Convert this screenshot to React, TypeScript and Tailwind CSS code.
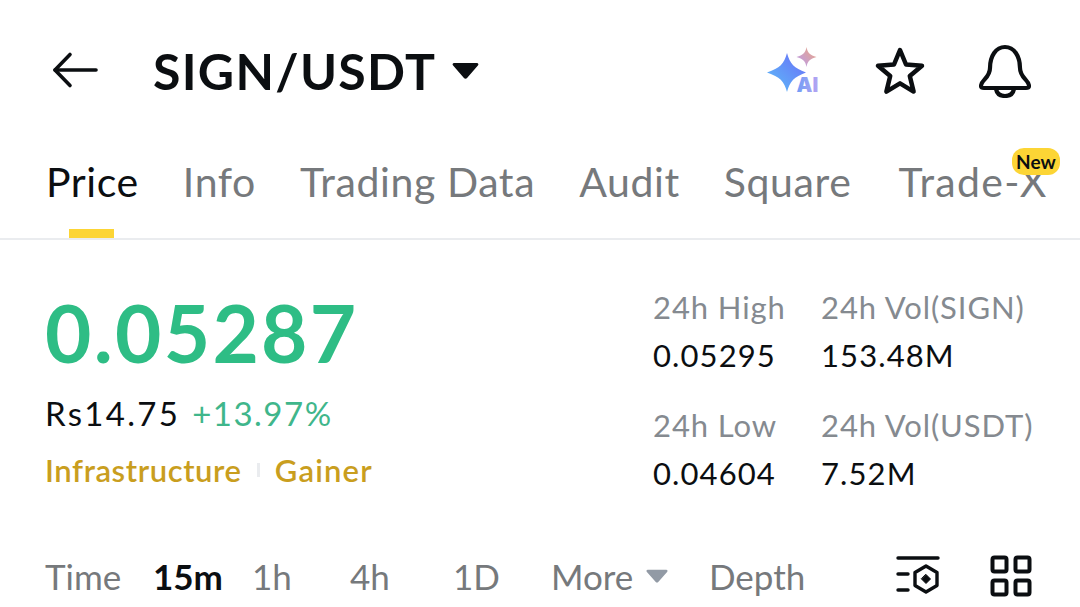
import * as React from "react";

// =============================================================================
// ICONS
// =============================================================================

const BackIcon = () => (
  <svg width="48" height="40" viewBox="0 0 48 40" fill="none" stroke="#0b0e11" strokeWidth="3.6" strokeLinecap="round" strokeLinejoin="round">
    <path d="M4 19H45" />
    <path d="M19 3.5L4 19L19 34.5" />
  </svg>
);

const SparkleIcon = () => (
  <svg width="54" height="50" viewBox="0 0 54 50" className="-mt-[2px] overflow-visible">
    <defs>
      <linearGradient id="bigStar" x1="0" y1="1" x2="1" y2="0">
        <stop offset="0" stopColor="#5cc0f8" />
        <stop offset="1" stopColor="#6a6cf8" />
      </linearGradient>
      <linearGradient id="smallStar" x1="0" y1="1" x2="1" y2="0">
        <stop offset="0" stopColor="#b79cf5" />
        <stop offset="1" stopColor="#eda67e" />
      </linearGradient>
      <linearGradient id="aiText" x1="0" y1="0" x2="1" y2="0">
        <stop offset="0" stopColor="#6f9df6" />
        <stop offset="1" stopColor="#b5a4f2" />
      </linearGradient>
    </defs>
    <path d="M20 8C23 19 27 23 39 27.5C27 32 23 36 20 47C17 36 13 32 0 27.5C13 23 17 19 20 8Z" fill="url(#bigStar)" />
    <path d="M39.5 2C40.5 8 43 10 49.5 12C43 14 40.5 16 39.5 22C38.5 16 36 14 29.5 12C36 10 38.5 8 39.5 2Z" fill="url(#smallStar)" />
    <text x="29.5" y="47" fontSize="20" fontWeight="900" fontFamily="Inter, sans-serif" fill="url(#aiText)">AI</text>
  </svg>
);

const StarIcon = () => (
  <svg width="52" height="50" viewBox="0 0 52 50" fill="none" stroke="#0b0e11" strokeWidth="4.5" strokeLinejoin="round">
    <path d="M26 4L32 18.5L48 19.8L35.8 30L39.6 45.6L26 37.4L12.4 45.6L16.2 30L4 19.8L20 18.5Z" />
  </svg>
);

const BellIcon = () => (
  <svg width="52" height="54" viewBox="0 0 52 54" fill="none" stroke="#0b0e11" strokeWidth="4.2" strokeLinejoin="round" strokeLinecap="round">
    <path d="M11 24C11 12 17 3 26 3C35 3 41 12 41 24C41 34 50 36 50 42C50 43.5 49 44 47 44H5C3 44 2 43.5 2 42C2 36 11 34 11 24Z" />
    <path d="M17 45C18 50 21 52 26 52C31 52 34 50 35 45" />
  </svg>
);

const IndicatorIcon = () => (
  <svg width="44" height="40" viewBox="0 0 44 40" fill="none" stroke="#0b0e11" strokeLinecap="round" strokeLinejoin="round">
    <path d="M2 2H42" strokeWidth="3.4" />
    <path d="M2 18H12" strokeWidth="3.4" />
    <path d="M2 34H12" strokeWidth="3.4" />
    <path d="M30 10L41 16.5V29.5L30 36L19 29.5V16.5Z" strokeWidth="3.4" />
    <path d="M30 18.5L34.5 23L30 27.5L25.5 23Z" fill="#0b0e11" strokeWidth="1" />
  </svg>
);

const GridIcon = () => (
  <svg width="42" height="42" viewBox="0 0 42 42" fill="none" stroke="#0b0e11" strokeWidth="4" strokeLinejoin="round">
    <rect x="2.5" y="2.5" width="14" height="14" rx="2" />
    <rect x="25.5" y="2.5" width="14" height="14" rx="2" />
    <rect x="2.5" y="25.5" width="14" height="14" rx="2" />
    <rect x="25.5" y="25.5" width="14" height="14" rx="2" />
  </svg>
);

const Caret = ({ color, width }: { color: string; width: number }) => (
  <svg width={width} height={width * 0.65} viewBox="0 0 26 17">
    <path d="M2 1H24C25.5 1 26 2.5 25 3.5L14.5 15.5C13.7 16.4 12.3 16.4 11.5 15.5L1 3.5C0 2.5 0.5 1 2 1Z" fill={color} />
  </svg>
);

// =============================================================================
// DATA
// =============================================================================

const tabs = ["Info", "Trading Data", "Audit", "Square"];

const stats = [
  { label: "24h High", value: "0.05295" },
  { label: "24h Vol(SIGN)", value: "153.48M" },
  { label: "24h Low", value: "0.04604" },
  { label: "24h Vol(USDT)", value: "7.52M" },
];

// =============================================================================
// COMPONENT
// =============================================================================

const App: React.FC = () => {
  return (
    <div className="h-[607px] w-[1080px] overflow-hidden bg-white font-['Lato','Inter',sans-serif] text-[#0b0e11]">
      {/* Header */}
      <div className="flex h-[142px] items-center pl-[51px] pr-[49px]">
        <BackIcon />
        <div className="ml-[54px] text-[50px] font-bold leading-none tracking-[1.3px]">SIGN/USDT</div>
        <div className="ml-[16px]">
          <Caret color="#0b0e11" width={27} />
        </div>
        <div className="ml-auto flex items-center">
          <SparkleIcon />
          <div className="ml-[53px]">
            <StarIcon />
          </div>
          <div className="ml-[53px]">
            <BellIcon />
          </div>
        </div>
      </div>

      {/* Tabs */}
      <div className="flex h-[98px] items-start gap-[44px] border-b-2 border-[#eaecef] pl-[46px] pt-[16px] text-[41px] leading-[48px] tracking-[0.6px] text-[#76797c]">
        <div className="relative text-[#0b0e11]">
          Price
          <div className="absolute left-[23px] top-[71px] h-[9px] w-[45px] bg-[#fcd535]" />
        </div>
        {tabs.map((tab) => (
          <div key={tab}>{tab}</div>
        ))}
        <div className="relative ml-[3px] tracking-[1.3px]">
          Trade-X
          <div className="absolute -right-[12px] -top-[10px] rounded-[12px] bg-[#fcd535] px-[4px] text-[19px] font-bold leading-[27px] tracking-normal text-[#0b0e11]">
            New
          </div>
        </div>
      </div>

      {/* Market summary */}
      <div className="flex pl-[45px] pt-[50px]">
        <div className="w-[608px]">
          <div className="text-[80px] font-bold leading-[84px] tracking-[2.3px] text-[#2ebd85]">0.05287</div>
          <div className="mt-[19px] flex items-center gap-[12px] text-[33px] leading-[40px]">
            <span className="tracking-[2.3px]">Rs14.75</span>
            <span className="tracking-[1.5px] text-[#3fb68b]">+13.97%</span>
          </div>
          <div className="mt-[18px] flex items-center text-[31px] font-semibold leading-[38px] tracking-[0.6px] text-[#c99e1e]">
            <span>Infrastructure</span>
            <span className="mx-[15px] h-[14px] w-[3px] bg-[#eaecef]" />
            <span className="tracking-[1.2px]">Gainer</span>
          </div>
        </div>
        <div className="-mt-[1px] grid grid-cols-[168px_230px] content-start gap-y-[34px]">
          {stats.map((stat) => (
            <div key={stat.label}>
              <div className="text-[31px] leading-[36px] tracking-[0.9px] text-[#858a90]">{stat.label}</div>
              <div className="mt-[12px] text-[31px] leading-[36px] tracking-[1.1px]">{stat.value}</div>
            </div>
          ))}
        </div>
      </div>

      {/* Chart toolbar */}
      <div className="mt-[63px] flex items-center pl-[45px] text-[35px] leading-[44px] text-[#76797c]">
        <div className="w-[108px]">Time</div>
        <div className="w-[99px] font-bold text-[#0b0e11]">15m</div>
        <div className="w-[98px]">1h</div>
        <div className="w-[103px]">4h</div>
        <div className="w-[98px]">1D</div>
        <div className="flex w-[158px] items-center gap-[13px]">
          More
          <Caret color="#929aa5" width={22} />
        </div>
        <div>Depth</div>
        <div className="ml-auto flex items-center gap-[50px] pr-[48px]">
          <IndicatorIcon />
          <GridIcon />
        </div>
      </div>
    </div>
  );
};

export default App;
